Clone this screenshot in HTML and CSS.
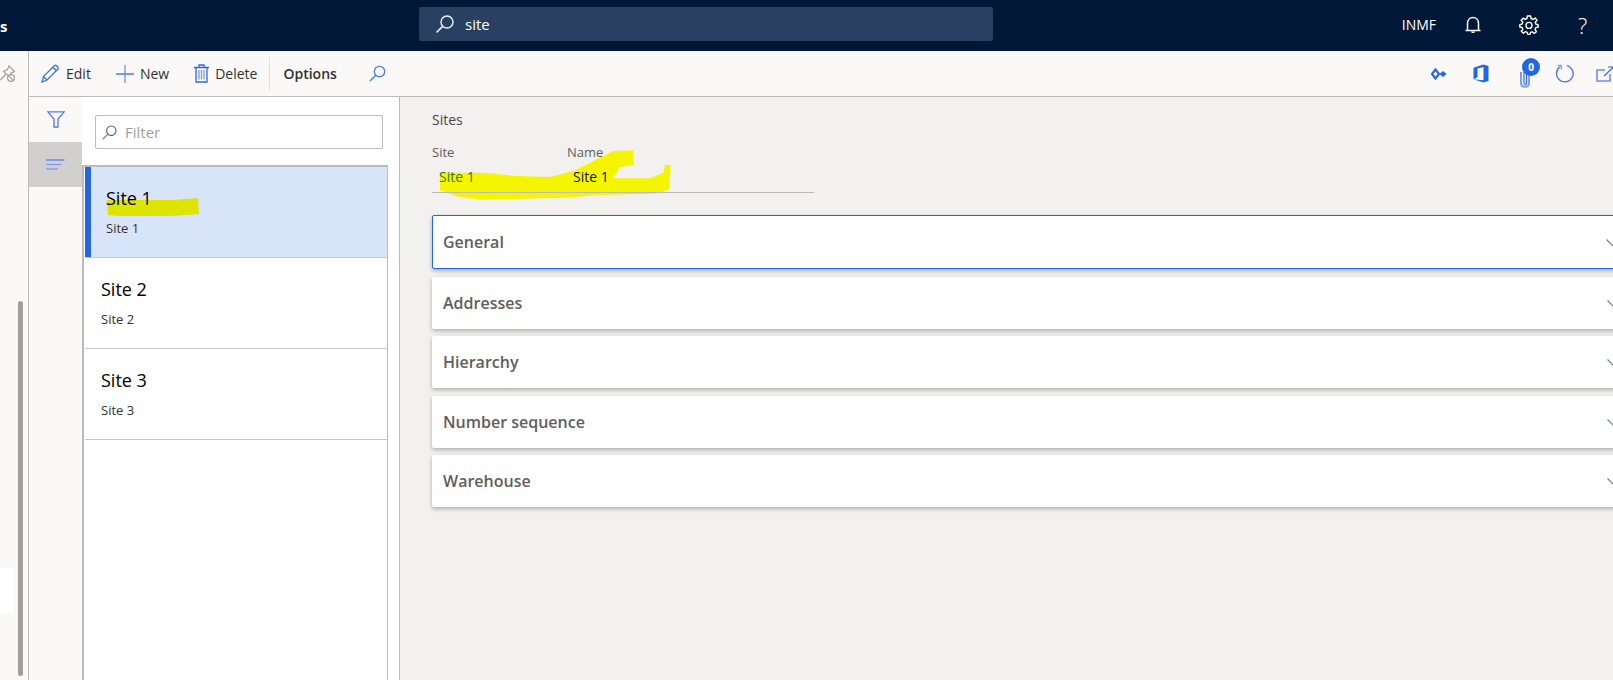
FILE: index.html
```html
<html>
  <head>
    <link rel="stylesheet" href="styles.css">
  </head>
  <body>
    <div class="top-bar">
      <div class="brand">s</div>
      <div class="search-box">
        <svg class="search-icon" width="20" height="20" viewBox="0 0 20 20"><circle cx="12" cy="8" r="6" fill="none" stroke="#e8f2ff" stroke-width="1.4"/><path d="M7.6 12.4 L1.5 18.5" stroke="#e8f2ff" stroke-width="1.6"/></svg>
        <span>site</span>
      </div>
      <div class="top-actions">
        <span class="company">INMF</span>
        <svg class="bell" width="16" height="18" viewBox="0 0 16 18"><path d="M2.5 14 V7.5 C2.5 -0.5 13.5 -0.5 13.5 7.5 V14 M0.5 14.5 H15.5" fill="none" stroke="#fff" stroke-width="1.5"/><path d="M6 15.5 C6.5 17.6 9.5 17.6 10 15.5 Z" fill="#fff"/></svg>
        <svg class="gear" width="20" height="20" viewBox="0 0 20 20"><path d="M8.4 1 H11.6 L12.1 3.5 L14.1 4.4 L16.3 3 L18 5.4 L16.2 7.2 L16.8 9 L19.2 9.8 V12 L16.8 12.6 L16.1 14.6 L17.4 16.7 L15.2 18.4 L13.4 16.8 L11.5 17.4 L11 19.4 H8.8 L8.2 17.3 L6.3 16.7 L4.4 18.2 L2.3 16.3 L3.8 14.4 L3.1 12.5 L0.8 12 V9.6 L3.1 9 L3.8 7.1 L2.2 5.2 L4.1 3.2 L6.1 4.4 L7.9 3.5 Z" fill="none" stroke="#fff" stroke-width="1.4" stroke-linejoin="round"/><circle cx="10" cy="10.4" r="3" fill="none" stroke="#fff" stroke-width="1.4"/></svg>
        <span class="help">?</span>
      </div>
    </div>

    <div class="app">
      <div class="nav-rail">
        <svg class="pin" width="16" height="18" viewBox="0 0 16 18"><path d="M9 1 L14.5 6.5 L11 8 L9.5 12 L3.5 6.5 L7.5 4.5 Z M5.5 9.5 L0.5 15" fill="none" stroke="#a19f9d" stroke-width="1.2"/><circle cx="11" cy="13" r="3.4" fill="#faf9f8" stroke="#a19f9d" stroke-width="1.2"/><path d="M8.8 10.8 L13.2 15.2" stroke="#a19f9d" stroke-width="1.2"/></svg>
        <div class="nav-white"></div>
        <div class="nav-scroll"></div>
      </div>

      <div class="workspace">
        <div class="toolbar">
          <div class="tool tool-edit">
            <svg width="19" height="19" viewBox="0 0 19 19"><path d="M1 18 L2.5 12.5 L13.5 1.5 C15 0.5 18 3.5 17 5 L6 16 Z M2.5 12.5 L6 16 M11.8 3.2 L15.3 6.7" fill="none" stroke="#3f6ee8" stroke-width="1.3"/></svg>
            <span>Edit</span>
          </div>
          <div class="tool tool-new">
            <svg width="18" height="18" viewBox="0 0 18 18"><path d="M9 0 V18" stroke="#8ea4f0" stroke-width="1.6"/><path d="M0 9 H18" stroke="#5f7fe8" stroke-width="1.6"/></svg>
            <span>New</span>
          </div>
          <div class="tool tool-delete">
            <svg width="15" height="19" viewBox="0 0 15 19"><path d="M0 3.5 H15 M5 3 V1 H10 V3 M2 4 V18 H13 V4" fill="none" stroke="#2f66e8" stroke-width="1.3"/><path d="M5 6 V15.5 M7.5 6 V15.5 M10 6 V15.5" stroke="#7d9cf0" stroke-width="1.3"/></svg>
            <span>Delete</span>
          </div>
          <div class="tool-sep"></div>
          <div class="options">Options</div>
          <svg class="tool-search" width="17" height="17" viewBox="0 0 17 17"><circle cx="10.5" cy="6.5" r="5.2" fill="none" stroke="#4f78ea" stroke-width="1.3"/><path d="M6.6 10.4 L1 16" stroke="#4f78ea" stroke-width="1.4"/></svg>
          <div class="tool-right">
            <svg class="ico-diamonds" width="16" height="12" viewBox="0 0 16 12"><path d="M4.5 1.5 L8 6 L4.5 10.5 L1 6 Z" fill="none" stroke="#2266e3" stroke-width="2.2"/><path d="M12 3 L15.5 6 L12 9 L8.5 6 Z" fill="#2266e3"/></svg>
            <svg class="ico-office" width="16" height="19" viewBox="0 0 16 19"><path d="M0.5 3.8 L10.5 0.5 L15.5 2 V17 L10.5 18.5 L0.5 15.2 L10.5 16.3 V3 L4.5 4.5 V13.2 L0.5 15.2 Z" fill="#2266e3"/></svg>
            <div class="attach">
              <svg width="14" height="22" viewBox="0 0 14 22"><path d="M2 6 V17 C2 22 10 22 10 17 V4" fill="none" stroke="#7d9cf0" stroke-width="2"/><path d="M5 6 V17 C5 19 7.5 19 7.5 17 V4" fill="none" stroke="#2f66e8" stroke-width="1.2"/></svg>
              <span class="badge">0</span>
            </div>
            <svg class="ico-refresh" width="19" height="19" viewBox="0 0 19 19"><path d="M5.5 2.5 A8.3 8.3 0 1 0 12 1.6" fill="none" stroke="#4f78ea" stroke-width="1.4"/><path d="M2.5 1.5 H6.5 V5.5" fill="none" stroke="#8ea4f0" stroke-width="1.3"/></svg>
            <svg class="ico-open" width="18" height="16" viewBox="0 0 18 16"><path d="M9 4 H1 V15 H14 V8" fill="none" stroke="#6f8fec" stroke-width="1.6"/><path d="M8 10 L17 1.5 M12 1 H17.5 V6" fill="none" stroke="#2f66e8" stroke-width="1.2"/></svg>
          </div>
        </div>

        <div class="content">
          <div class="filter-rail">
            <div class="rail-btn">
              <svg width="18" height="17" viewBox="0 0 18 17"><path d="M0.8 0.8 H17.2 L11 8 V16 H7 V8 Z" fill="none" stroke="#4f78ea" stroke-width="1.3"/></svg>
            </div>
            <div class="rail-btn rail-btn-active">
              <svg width="19" height="11" viewBox="0 0 19 11"><path d="M0 1 H18.5" stroke="#5f7fe8" stroke-width="1.3"/><path d="M0 5.5 H15" stroke="#7d9cf0" stroke-width="1.3"/><path d="M0 10 H12" stroke="#7d9cf0" stroke-width="1.3"/></svg>
            </div>
          </div>

          <div class="list-pane">
            <div class="filter-input">
              <svg width="15" height="15" viewBox="0 0 15 15"><circle cx="9.3" cy="5.7" r="4.7" fill="none" stroke="#605e5c" stroke-width="1.1"/><path d="M5.8 9.2 L0.8 14.2" stroke="#8a8886" stroke-width="1.3"/></svg>
              <span>Filter</span>
            </div>
            <div class="site-list">
              <div class="site-item site-item-active">
                <svg class="marker-list" width="94" height="20" viewBox="0 0 94 20"><path d="M1 2 H66 L92 0 L93 16 L66 18 H13 L2 17 Z" fill="#dde400"/></svg>
                <div class="site-title">Site 1</div>
                <div class="site-sub">Site 1</div>
              </div>
              <div class="site-item">
                <div class="site-title">Site 2</div>
                <div class="site-sub">Site 2</div>
              </div>
              <div class="site-item">
                <div class="site-title">Site 3</div>
                <div class="site-sub">Site 3</div>
              </div>
            </div>
          </div>

          <div class="detail">
            <svg class="marker-head" width="440" height="200" viewBox="0 0 1320 600"><path d="M120 245 L250 245 L350 255 L450 258 L520 240 L580 210 L640 180 L700 178 L702 222 L660 228 L640 262 L750 262 L790 245 L795 222 L812 222 L808 295 L770 308 L600 312 L490 320 L240 326 L170 316 L120 298 Z" fill="#f5f500"/></svg>
            <div class="detail-title">Sites</div>
            <div class="fields">
              <div class="field field-site">
                <label>Site</label>
                <div class="field-value field-value-green">Site 1</div>
              </div>
              <div class="field field-name">
                <label>Name</label>
                <div class="field-value">Site 1</div>
              </div>
            </div>
            <div class="tab tab-active"><span>General</span><svg width="16" height="9" viewBox="0 0 16 9"><path d="M0.5 0.5 L8 8 L15.5 0.5" fill="none" stroke="#5b7f9a" stroke-width="1.1"/></svg></div>
            <div class="tab"><span>Addresses</span><svg width="16" height="9" viewBox="0 0 16 9"><path d="M0.5 0.5 L8 8 L15.5 0.5" fill="none" stroke="#5b7f9a" stroke-width="1.1"/></svg></div>
            <div class="tab"><span>Hierarchy</span><svg width="16" height="9" viewBox="0 0 16 9"><path d="M0.5 0.5 L8 8 L15.5 0.5" fill="none" stroke="#5b7f9a" stroke-width="1.1"/></svg></div>
            <div class="tab"><span>Number sequence</span><svg width="16" height="9" viewBox="0 0 16 9"><path d="M0.5 0.5 L8 8 L15.5 0.5" fill="none" stroke="#5b7f9a" stroke-width="1.1"/></svg></div>
            <div class="tab"><span>Warehouse</span><svg width="16" height="9" viewBox="0 0 16 9"><path d="M0.5 0.5 L8 8 L15.5 0.5" fill="none" stroke="#5b7f9a" stroke-width="1.1"/></svg></div>
          </div>
        </div>
      </div>
    </div>
  </body>
</html>
```

FILE: styles.css
```css
html, body { margin: 0; height: 100%; overflow: hidden; }
body { font-family: "Open Sans", "Noto Sans", sans-serif; color: #323130; display: flex; flex-direction: column; background: #faf9f8; }

.top-bar { height: 51px; flex: none; background: #001737; color: #fff; display: flex; align-items: center; }
.brand { width: 419px; font-size: 15px; font-weight: 700; }
.search-box { width: 574px; height: 34px; margin-top: -4px; background: #2a4063; border-radius: 2px; display: flex; align-items: center; font-size: 15px; color: #fff; }
.search-icon { margin-left: 16px; margin-right: 10px; }
.top-actions { margin-left: auto; display: flex; align-items: center; margin-top: -2px; }
.company { font-size: 14px; margin-right: 29px; }
.bell { margin-right: 38px; }
.gear { margin-right: 39px; }
.help { font-size: 22px; font-weight: 300; margin-right: 22px; width: 13px; }

.app { flex: 1; display: flex; min-height: 0; }
.nav-rail { width: 28px; flex: none; position: relative; border-right: 1px solid #bdbbb8; overflow: hidden; }
.pin { position: absolute; left: 0; top: 14px; }
.nav-white { position: absolute; left: 0; top: 517px; width: 13px; height: 45px; background: #fff; }
.nav-scroll { position: absolute; left: 18px; top: 250px; width: 5px; height: 375px; border-radius: 3px; background: #a19f9d; }

.workspace { flex: 1; display: flex; flex-direction: column; min-width: 0; }
.toolbar { height: 45px; flex: none; display: flex; align-items: center; background: #faf9f8; border-bottom: 1px solid #bdbbb8; font-size: 14px; }
.tool { display: flex; align-items: center; color: #323130; }
.tool span { margin-left: 6px; }
.tool-edit { margin-left: 12px; }
.tool-new { margin-left: 25px; }
.tool-delete { margin-left: 25px; }
.tool-sep { width: 1px; height: 33px; background: #e1dfdd; margin-left: 12px; }
.options { margin-left: 13px; font-weight: 600; font-size: 14px; }
.tool-search { margin-left: 32px; }
.tool-right { margin-left: auto; display: flex; align-items: center; }
.ico-office { margin-left: 26px; }
.attach { margin-left: 30px; width: 22px; height: 26px; position: relative; }
.attach svg { display: block; margin-top: 5px; }
.badge { position: absolute; left: 3px; top: -3px; width: 18px; height: 18px; border-radius: 50%; background: #2266e3; color: #fff; font-size: 10px; font-weight: 700; text-align: center; line-height: 18px; }
.ico-refresh { margin-left: 14px; }
.ico-open { margin-left: 22px; margin-right: -1px; }

.content { flex: 1; display: flex; min-height: 0; }
.filter-rail { width: 53px; flex: none; background: #faf9f8; }
.rail-btn { height: 45px; display: flex; align-items: center; justify-content: center; }
.rail-btn-active { background: #d2d0ce; }

.list-pane { width: 317px; flex: none; background: #fff; border-right: 1px solid #bdbbb8; }
.filter-input { height: 32px; margin: 18px 0 0 13px; width: 286px; border: 1px solid #bdbbb8; border-radius: 2px; display: flex; align-items: center; font-size: 15px; color: #a19f9d; }
.filter-input svg { margin-left: 6px; margin-right: 8px; }
.site-list { margin-top: 16px; width: 306px; height: 600px; box-sizing: border-box; border-left: 2px solid #bdbbb8; border-right: 1px solid #bdbbb8; border-top: 2px solid #bdbbb8; margin-left: 0; padding-left: 1px; }
.site-item { height: 90px; box-sizing: content-box; padding-left: 16px; border-bottom: 1px solid #c8c6c4; position: relative; display: flex; flex-direction: column; }
.site-title { font-size: 18px; font-weight: 500; color: #000; margin-top: 18px; line-height: 26px; position: relative; }
.site-sub { font-size: 13px; margin-top: 8px; line-height: 18px; color: #323130; position: relative; }
.site-item-active { background: #d8e4fa; box-shadow: inset 6px 0 0 #2266e3; padding-left: 21px; }
.marker-list { position: absolute; left: 21px; top: 31px; }

.detail { flex: 1; min-width: 0; background: #f2f1ef; padding-left: 32px; position: relative; overflow: hidden; }
.marker-head { position: absolute; left: 0; top: -6px; }
.detail-title { font-size: 14px; line-height: 20px; margin-top: 13px; color: #484644; position: relative; }
.fields { display: flex; margin-top: 13px; width: 382px; border-bottom: 1px solid #bdbbb8; position: relative; }
.field-site { width: 135px; }
.field label { display: block; font-size: 13px; line-height: 18px; color: #605e5c; }
.field-value { font-size: 14px; line-height: 20px; margin: 6px 0 5px 6px; color: #111; }
.field-value-green { margin-left: 7px; color: #3f7a00; }

.tab { height: 52px; width: 1208px; margin-top: 7.6px; background: #fff; box-shadow: 0 2px 4px rgba(0,0,0,0.28); border-radius: 2px; display: flex; align-items: center; justify-content: space-between; font-size: 16px; font-weight: 600; color: #605e5c; padding: 0 17px 0 11px; box-sizing: border-box; }
.tab svg { margin-top: 3px; }
.tab-active { margin-top: 22px; height: 54px; border: 1px solid #2266e3; padding-left: 10px; }
```
